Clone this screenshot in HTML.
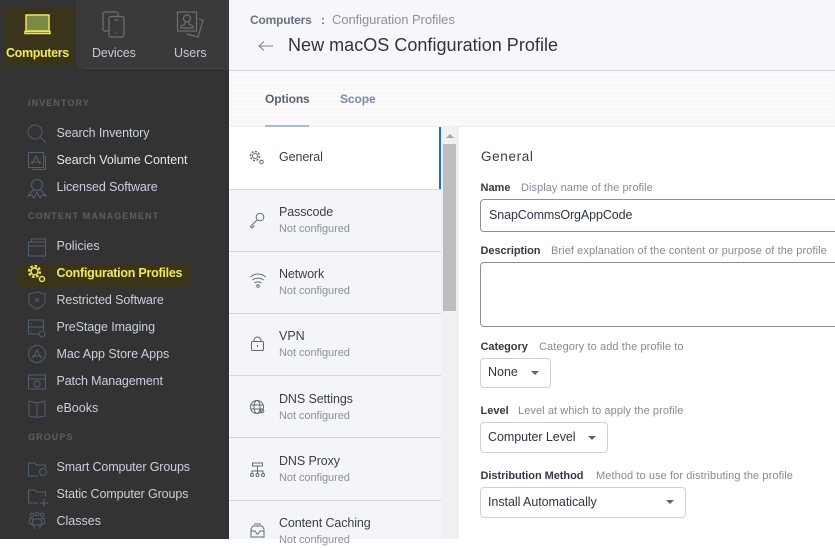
<!DOCTYPE html>
<html><head><meta charset="utf-8"><style>
html,body{margin:0;padding:0}
body{width:835px;height:539px;overflow:hidden;position:relative;background:#fff;font-family:"Liberation Sans",sans-serif}
.a{position:absolute}
.t{position:absolute;white-space:nowrap;line-height:16px}
.nav{font-size:12.5px;color:#c9d0dc;left:56.5px}
.sec{font-size:9px;font-weight:bold;color:#5f5f5f;left:28px;letter-spacing:1.1px}
.li{font-size:12.5px;color:#3a3f4a;left:279px}
.nc{font-size:11px;color:#8a919c;left:279px}
.sep{position:absolute;left:229px;width:212px;height:1px;background:#d5d7dc}
.lb{font-size:11px;font-weight:bold;color:#333a46;left:480.5px}
.hp{font-size:11px;color:#858b96}
.box{position:absolute;background:#fff;box-sizing:border-box;border-radius:4px}
.val{font-size:12.5px;color:#2f3441}
.car{position:absolute;width:0;height:0;border-left:4px solid transparent;border-right:4px solid transparent;border-top:4px solid #5d6472}
svg{position:absolute;overflow:visible;fill:none}
</style></head><body>
<!-- sidebar -->
<div class="a" style="left:0;top:0;width:229px;height:539px;background:#333"></div>
<div class="a" style="left:76px;top:0;width:153px;height:69px;background:#3a3a3a;border-bottom:1px solid #444;border-bottom-left-radius:10px;box-sizing:border-box"></div>
<div class="a" style="left:5px;top:8px;width:68px;height:58px;background:#39341a"></div>
<svg style="left:0;top:0" width="229" height="70">
<rect x="26" y="15" width="23" height="16" fill="#7b8b45" stroke="#efe55a" stroke-width="1.5"/>
<path d="M25 31.500v2h25v-2z" stroke="#efe55a" stroke-width="1.500"/>
<g stroke="#6f6f6f" stroke-width="1.200">
<path d="M109 31h-4a2 2 0 0 1-2-2v-15a2 2 0 0 1 2-2h11a2 2 0 0 1 2 2v2"/>
<rect x="109" y="16.500" width="15" height="20.500" rx="2"/>
<path d="M114.500 20h4M115.500 33h1"/>
<rect x="177.500" y="12" width="19" height="19"/>
<circle cx="187" cy="18.500" r="3.500"/>
<path d="M185 22v2l-4 2v2h12v-2l-4-2v-2"/>
<path d="M199 19l4 1.500-5 16.500-11-3"/>
</g>
</svg>
<div class="t" style="left:6px;top:45px;font-size:12.5px;font-weight:bold;color:#f0e85c;letter-spacing:-.35px">Computers</div>
<div class="t" style="left:92px;top:45px;font-size:12.5px;color:#c2cad6;letter-spacing:-.1px">Devices</div>
<div class="t" style="left:174px;top:45px;font-size:12.5px;color:#c2cad6">Users</div>
<div class="t sec" style="top:95px">INVENTORY</div>
<div class="t sec" style="top:208px">CONTENT MANAGEMENT</div>
<div class="t sec" style="top:429px">GROUPS</div>
<div class="a" style="left:17px;top:264px;width:175px;height:23px;background:#39341a"></div>
<div class="t nav" style="top:125px;letter-spacing:-.1px">Search Inventory</div>
<div class="t nav" style="top:152px;color:#e4e7ec;letter-spacing:-.05px">Search Volume Content</div>
<div class="t nav" style="top:179px;letter-spacing:-.1px">Licensed Software</div>
<div class="t nav" style="top:238px">Policies</div>
<div class="t nav" style="top:265px;font-weight:bold;color:#f0e85c;letter-spacing:-.25px">Configuration Profiles</div>
<div class="t nav" style="top:292px;letter-spacing:-.1px">Restricted Software</div>
<div class="t nav" style="top:319px;letter-spacing:-.1px">PreStage Imaging</div>
<div class="t nav" style="top:346px;letter-spacing:-.03px">Mac App Store Apps</div>
<div class="t nav" style="top:373px;letter-spacing:-.13px">Patch Management</div>
<div class="t nav" style="top:400px">eBooks</div>
<div class="t nav" style="top:459px;letter-spacing:-.13px">Smart Computer Groups</div>
<div class="t nav" style="top:486px;letter-spacing:-.1px">Static Computer Groups</div>
<div class="t nav" style="top:513px">Classes</div>
<svg style="left:0;top:0" width="229" height="539">
<g stroke="#515f75" stroke-width="1">
<circle cx="35" cy="132" r="7"/><path d="M40 137l6 6"/>
<rect x="28.500" y="152.500" width="15" height="15"/><path d="M45.500 156v13.500h-14M32 164l4-8 4 8M31 162h10"/>
<circle cx="37" cy="185" r="5.500"/><path d="M33 190l-5 6 4-1 2 3 3-6 3 6 2-3 4 1-5-6"/>
<rect x="28.500" y="242" width="17" height="14"/><path d="M28.500 246h17M31.500 242v-3h14v14"/>
<path d="M37 292l8 2v7c0 4-4 6-8 8-4-2-8-4-8-8v-7z"/><path d="M35 298l4 4M39 298l-4 4"/>
<rect x="28.500" y="320" width="15" height="7"/><path d="M28.500 327v7h10M43.500 327v3M31 323.500h1M31 331h1"/><circle cx="42" cy="334" r="3"/>
<circle cx="37" cy="354" r="8.500"/><path d="M33 358l4-8 4 8M32 356h10"/>
<rect x="28.500" y="375" width="17" height="14"/><path d="M28.500 379h17"/><circle cx="37" cy="384" r="3"/>
<path d="M37 403l-8-2v15l8 1.500 8-1.500v-15zM37 403v14"/>
<path d="M38 476h-9.500v-13h6l2 2h9v3"/><circle cx="43" cy="472" r="3.500"/>
<path d="M38 503h-9.500v-13h6l2 2h9v5M44 499v8M40 503h8"/>
<circle cx="32" cy="515" r="1.800"/><circle cx="37" cy="514" r="1.800"/><circle cx="42" cy="515" r="1.800"/>
<path d="M34 529v-4l-5-2 1-5 3 1M40 529v-4l5-2-1-5-3 1M33 519h8l1 6h-10z"/>
</g>
<g stroke="#efe55a" stroke-width="1.500">
<circle cx="34.500" cy="271.500" r="3.500"/>
<circle cx="34.500" cy="271.500" r="5.500" stroke-dasharray="2.500 1.800" stroke-width="2.200"/>
<circle cx="42" cy="279" r="2.500"/>
</g>
</svg>
<!-- header -->
<div class="a" style="left:229px;top:0;width:606px;height:70px;background:#f6f7fa"></div>
<div class="a" style="left:229px;top:70px;width:606px;height:1px;background:#cbd1da"></div>
<div class="a" style="left:229px;top:71px;width:606px;height:55px;background-color:#fafafa;background-image:radial-gradient(#f4f4f4 1px,transparent 1px);background-size:4px 4px"></div>
<div class="a" style="left:229px;top:126px;width:606px;height:1px;background:#eceef2"></div>
<div class="t" style="left:250px;top:12px;font-size:12px;font-weight:bold;color:#6b7280;letter-spacing:-.2px">Computers</div>
<div class="t" style="left:321px;top:12px;font-size:12px;font-weight:bold;color:#6b7280">:</div>
<div class="t" style="left:332px;top:12px;font-size:13px;color:#8b919b;letter-spacing:-.07px">Configuration Profiles</div>
<svg style="left:258px;top:40px" width="16" height="12"><path d="M15 6H1M6 1.500L1 6l5 4.500" stroke="#7d838e" stroke-width="1.100"/></svg>
<div class="t" style="left:288px;top:35px;font-size:18px;line-height:20px;color:#30343c;letter-spacing:.03px">New macOS Configuration Profile</div>
<div class="t" style="left:265px;top:91px;font-size:12px;font-weight:bold;color:#5a6270;letter-spacing:-.1px">Options</div>
<div class="t" style="left:340px;top:91px;font-size:12px;font-weight:bold;color:#7c8ba3;letter-spacing:-.1px">Scope</div>
<div class="a" style="left:265px;top:125px;width:44px;height:2px;background:#a9bcd6"></div>
<!-- list -->
<div class="a" style="left:229px;top:127px;width:212px;height:412px;background:#f3f5f9"></div>
<div class="a" style="left:229px;top:127px;width:210px;height:62px;background:#fff"></div>
<div class="a" style="left:439px;top:127px;width:2px;height:62px;background:#1a6ddb"></div>
<div class="a" style="left:441px;top:127px;width:18px;height:412px;background:#f0f0f0"></div>
<div class="a" style="left:443px;top:144px;width:13px;height:167px;background:#bdbdbd"></div>
<div class="a" style="left:446px;top:134px;width:0;height:0;border-left:4px solid transparent;border-right:4px solid transparent;border-bottom:4px solid #a6a6a6"></div>
<div class="sep" style="top:189px"></div>
<div class="sep" style="top:251px"></div>
<div class="sep" style="top:313px"></div>
<div class="sep" style="top:375px"></div>
<div class="sep" style="top:437px"></div>
<div class="sep" style="top:500px"></div>
<div class="t li" style="top:149px;letter-spacing:-.1px">General</div>
<div class="t li" style="top:204px;letter-spacing:-.1px">Passcode</div><div class="t nc" style="top:221px;letter-spacing:-.05px">Not configured</div>
<div class="t li" style="top:266px;letter-spacing:-.1px">Network</div><div class="t nc" style="top:283px;letter-spacing:-.05px">Not configured</div>
<div class="t li" style="top:328px">VPN</div><div class="t nc" style="top:345px;letter-spacing:-.05px">Not configured</div>
<div class="t li" style="top:391px;letter-spacing:-.1px">DNS Settings</div><div class="t nc" style="top:408px;letter-spacing:-.05px">Not configured</div>
<div class="t li" style="top:453px;letter-spacing:-.1px">DNS Proxy</div><div class="t nc" style="top:470px;letter-spacing:-.05px">Not configured</div>
<div class="t li" style="top:515px;letter-spacing:-.1px">Content Caching</div><div class="t nc" style="top:532px;letter-spacing:-.05px">Not configured</div>
<svg style="left:0;top:0" width="835" height="539">
<g stroke="#646b77" stroke-width="1">
<circle cx="255" cy="156" r="2.500"/><circle cx="255" cy="156" r="4.500" stroke-dasharray="2 1.500" stroke-width="1.600"/><circle cx="261.500" cy="162" r="1.800"/>
<circle cx="260" cy="217" r="3.800"/><path d="M257 220l-6.500 6.500 1.500 1.500 1.500-1.500 1-1"/>
<path d="M250.500 277c4-4 11-4 15 0M252.500 280c3-2.500 8-2.500 11 0M254.500 283c2-1.500 5-1.500 7 0"/><circle cx="258" cy="286" r="1.300"/>
<rect x="251.500" y="341.500" width="12" height="9" rx="1"/><path d="M254 341.500v-1a3.500 3.500 0 0 1 7 0v1M257.500 345v2"/>
<circle cx="257" cy="407" r="6.500"/><ellipse cx="257" cy="407" rx="3" ry="6.500"/><path d="M251 405h12M251 409h12"/><circle cx="262" cy="411" r="1.800"/>
<rect x="252.500" y="463" width="10" height="3"/><path d="M257.500 466v5M252 474v-3h11v3M257.500 471v3"/><circle cx="252" cy="475" r="1.500"/><circle cx="257.500" cy="475" r="1.500"/><circle cx="263" cy="475" r="1.500"/>
<path d="M251 529v8h13v-8l-2-3h-9zM251 531h4l2 3h1l2-3h4M254 524h7"/>
</g>
</svg>
<!-- form -->
<div class="t" style="left:481px;top:149px;font-size:13.5px;color:#3a3d44;letter-spacing:.65px">General</div>
<div class="t lb" style="top:180px">Name</div><div class="t hp" style="left:521px;top:180px;letter-spacing:.06px">Display name of the profile</div>
<div class="box" style="left:480px;top:199px;width:370px;height:33px;border:1px solid #8d8f94"></div>
<div class="t val" style="left:489px;top:207px;letter-spacing:-.1px">SnapCommsOrgAppCode</div>
<div class="t lb" style="top:243px;letter-spacing:-.05px">Description</div><div class="t hp" style="left:551px;top:243px;letter-spacing:.085px">Brief explanation of the content or purpose of the profile</div>
<div class="box" style="left:480px;top:262px;width:370px;height:65px;border:1px solid #8d8f94"></div>
<div class="t lb" style="top:339px;letter-spacing:-.05px">Category</div><div class="t hp" style="left:539px;top:339px;letter-spacing:.09px">Category to add the profile to</div>
<div class="box" style="left:480px;top:358px;width:71px;height:30px;border:1px solid #ccd0d8"></div>
<div class="t val" style="left:488px;top:364px">None</div><div class="car" style="left:531px;top:371px"></div>
<div class="t lb" style="top:403px">Level</div><div class="t hp" style="left:518px;top:403px;letter-spacing:.08px">Level at which to apply the profile</div>
<div class="box" style="left:480px;top:422px;width:128px;height:31px;border:1px solid #ccd0d8"></div>
<div class="t val" style="left:488px;top:429px;letter-spacing:-.05px">Computer Level</div><div class="car" style="left:588px;top:436px"></div>
<div class="t lb" style="top:468px;letter-spacing:-.05px">Distribution Method</div><div class="t hp" style="left:596px;top:468px;letter-spacing:.09px">Method to use for distributing the profile</div>
<div class="box" style="left:480px;top:487px;width:206px;height:31px;border:1px solid #ccd0d8"></div>
<div class="t val" style="left:488px;top:494px;letter-spacing:-.05px">Install Automatically</div><div class="car" style="left:666px;top:500px"></div>
</body></html>
